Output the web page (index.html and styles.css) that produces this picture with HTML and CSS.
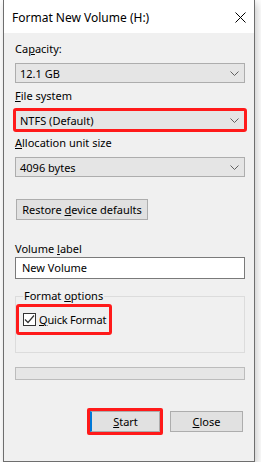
FILE: index.html
```html
<!DOCTYPE html>
<html lang="en">
<head>
    <meta charset="UTF-8">
    <meta name="viewport" content="width=device-width, initial-scale=1.0">
    <title>Format New Volume (H:)</title>
    <link rel="stylesheet" href="styles.css">
</head>
<body>
    <div class="window">
        <div class="titlebar">
            <span class="title">Format New Volume (H:)</span>
            <svg class="close" width="11" height="11" viewBox="0 0 11 11">
                <path d="M0.5 0.5 L10.5 10.5 M10.5 0.5 L0.5 10.5" stroke="#000" stroke-width="1"/>
            </svg>
        </div>

        <div class="content">
            <div class="label label-first">Ca<u>p</u>acity:</div>
            <div class="combo">
                <span>12.1 GB</span>
                <svg class="chevron" width="9" height="5" viewBox="0 0 9 5"><path d="M0.5 0.5 L4.5 4.5 L8.5 0.5" fill="none" stroke="#606060"/></svg>
            </div>

            <div class="label"><u>F</u>ile system</div>
            <div class="combo marked">
                <span>NTFS (Default)</span>
                <svg class="chevron" width="9" height="5" viewBox="0 0 9 5"><path d="M0.5 0.5 L4.5 4.5 L8.5 0.5" fill="none" stroke="#606060"/></svg>
            </div>

            <div class="label"><u>A</u>llocation unit size</div>
            <div class="combo">
                <span>4096 bytes</span>
                <svg class="chevron" width="9" height="5" viewBox="0 0 9 5"><path d="M0.5 0.5 L4.5 4.5 L8.5 0.5" fill="none" stroke="#606060"/></svg>
            </div>

            <button class="btn btn-restore">Restore <u>d</u>evice defaults</button>

            <div class="label label-volume">Volume <u>l</u>abel</div>
            <div class="textbox">New Volume</div>

            <fieldset class="group">
                <legend>Format <u>o</u>ptions</legend>
                <div class="check marked">
                    <span class="box">
                        <svg width="11" height="11" viewBox="0 0 11 11"><path d="M1 5.5 L4 8.5 L10 1.5" fill="none" stroke="#333" stroke-width="1.2"/></svg>
                    </span>
                    <span class="check-text"><u>Q</u>uick Format</span>
                </div>
            </fieldset>

            <div class="progress"></div>

            <div class="actions">
                <div class="mark-wrap">
                    <button class="btn btn-start"><u>S</u>tart</button>
                </div>
                <button class="btn btn-close"><u>C</u>lose</button>
            </div>
        </div>
    </div>
</body>
</html>
```

FILE: styles.css
```css
body {
    margin: 0;
    padding: 0;
    background-color: #ffffff;
    font-family: "Noto Sans", "Liberation Sans", Arial, sans-serif;
    font-size: 11px;
    color: #000;
}
.window {
    box-sizing: border-box;
    width: 252px;
    height: 462px;
    margin-left: 3px;
    background-color: #f0f0f0;
    border: 1px solid #6e6e6e;
    border-top: none;
    box-shadow: 2px 3px 8px rgba(0, 0, 0, 0.22);
}
.titlebar {
    height: 33px;
    background-color: #fff;
    display: flex;
    align-items: center;
    justify-content: space-between;
    padding: 0 8px 0 8px;
}
.title {
    font-size: 12px;
    padding-top: 2px;
}
.close {
    display: block;
    margin-top: 1px;
}
.content {
    padding: 0 9px 0 11px;
}
.label {
    line-height: 16px;
    margin-top: 5px;
}
.label-first {
    margin-top: 8px;
}
.label-volume {
    margin-top: 21px;
}
.combo {
    box-sizing: border-box;
    height: 20px;
    margin-top: 6px;
    background-color: #e5e5e5;
    border: 1px solid #adadad;
    display: flex;
    align-items: center;
    justify-content: space-between;
    padding: 0 5px 0 4px;
}
.combo .chevron {
    display: block;
}
.marked {
    outline: 3px solid #ff1a1a;
    outline-offset: -1px;
    border-radius: 1px;
}
.btn {
    box-sizing: border-box;
    height: 21px;
    font-family: inherit;
    font-size: 11px;
    color: #000;
    background-color: #e1e1e1;
    border: 1px solid #adadad;
    padding: 0;
}
.btn-restore {
    display: block;
    width: 132px;
    margin: 22px 0 0 1px;
}
.textbox {
    box-sizing: border-box;
    height: 22px;
    margin-top: 0;
    background-color: #fff;
    border: 1px solid #7a7a7a;
    padding: 0 6px;
    line-height: 20px;
}
.group {
    margin: 9px 0 0 0;
    padding: 0 0 19px 1px;
    border: 1px solid #dcdcdc;
    min-width: 0;
}
.group legend {
    padding: 0 1px;
    margin-left: 6px;
    line-height: 16px;
}
.check {
    box-sizing: border-box;
    width: 92px;
    height: 27px;
    margin: 2px 0 0 1px;
    display: flex;
    align-items: center;
    gap: 3px;
    padding-left: 5px;
    white-space: nowrap;
}
.check .box {
    box-sizing: border-box;
    flex: none;
    width: 13px;
    height: 13px;
    background-color: #fff;
    border: 1px solid #333;
    display: flex;
    align-items: center;
    justify-content: center;
}
.check .box svg {
    display: block;
}
.check-text {
    font-size: 11px;
    letter-spacing: -0.2px;
}
.progress {
    box-sizing: border-box;
    height: 13px;
    margin-top: 14px;
    background-color: #e6e6e6;
    border: 1px solid #bcbcbc;
}
.actions {
    display: flex;
    justify-content: flex-end;
    align-items: center;
    gap: 7px;
    margin-top: 28px;
    padding-right: 2px;
}
.mark-wrap {
    display: flex;
    border: 3px solid #ff1a1a;
    border-radius: 2px;
}
.actions .btn {
    width: 73px;
}
.btn-start {
    width: 70px !important;
    border-left: 2px solid #0078d7;
}
```
